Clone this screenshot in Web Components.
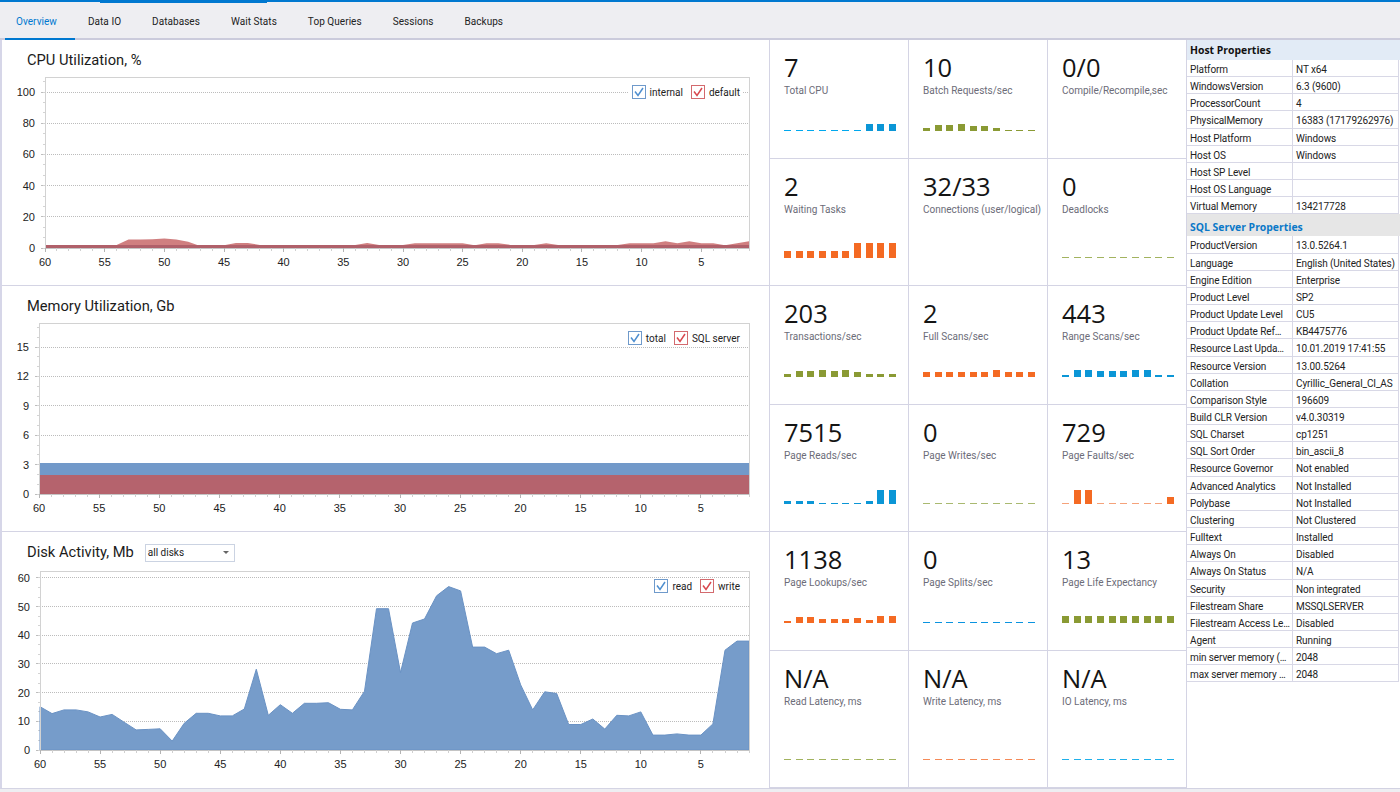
<!DOCTYPE html>
<html>
<head>
<meta charset="utf-8">
<title>Overview</title>
<style>
  html, body { margin: 0; background: #eeeef2; }
</style>
</head>
<body>
<dash-app>
  <tab-bar slot="tabs" tabs="Overview,Data IO,Databases,Wait Stats,Top Queries,Sessions,Backups"></tab-bar>

  <chart-panel slot="charts" heading="CPU Utilization, %" style="height:245px">
    <area-chart dataset="cpu"></area-chart>
  </chart-panel>
  <chart-panel slot="charts" heading="Memory Utilization, Gb" style="height:245px">
    <area-chart dataset="memory"></area-chart>
  </chart-panel>
  <chart-panel slot="charts" heading="Disk Activity, Mb" head="39" style="height:256px">
    <combo-box slot="tools" value="all disks"></combo-box>
    <area-chart dataset="disk"></area-chart>
  </chart-panel>

  <metric-tile slot="tiles" value="7" label="Total CPU" color="#0b96d6" dash="#00a8ee" bars="1,1,1,1,1,1,1,7,7,7"></metric-tile>
  <metric-tile slot="tiles" value="10" label="Batch Requests/sec" color="#8a9a34" dash="#8a9a34" bars="3,6,6,7,5,5,3,1,1,1"></metric-tile>
  <metric-tile slot="tiles" value="0/0" label="Compile/Recompile,sec"></metric-tile>
  <metric-tile slot="tiles" value="2" label="Waiting Tasks" color="#f46a23" bars="7,7,7,7,7,7,15,15,15,15"></metric-tile>
  <metric-tile slot="tiles" value="32/33" label="Connections (user/logical)"></metric-tile>
  <metric-tile slot="tiles" value="0" label="Deadlocks" color="#8a9a34" dash="#a2b35f" bars="1,1,1,1,1,1,1,1,1,1"></metric-tile>
  <metric-tile slot="tiles" value="203" label="Transactions/sec" color="#8a9a34" bars="3,6,6,7,6,7,5,3,3,3"></metric-tile>
  <metric-tile slot="tiles" value="2" label="Full Scans/sec" color="#f46a23" bars="5,5,5,5,5,5,7,5,5,5"></metric-tile>
  <metric-tile slot="tiles" value="443" label="Range Scans/sec" color="#0b96d6" bars="2,7,7,6,6,6,7,7,2,2"></metric-tile>
  <metric-tile slot="tiles" value="7515" label="Page Reads/sec" color="#0b96d6" bars="3,3,3,1,1,1,1,3,14,14"></metric-tile>
  <metric-tile slot="tiles" value="0" label="Page Writes/sec" color="#8a9a34" dash="#a9b970" bars="1,1,1,1,1,1,1,1,1,1"></metric-tile>
  <metric-tile slot="tiles" value="729" label="Page Faults/sec" color="#f46a23" dash="#f5a27a" bars="1,14,14,1,1,1,1,1,1,7"></metric-tile>
  <metric-tile slot="tiles" value="1138" label="Page Lookups/sec" color="#f46a23" bars="2,6,6,4,4,4,5,3,7,7"></metric-tile>
  <metric-tile slot="tiles" value="0" label="Page Splits/sec" color="#0b96d6" dash="#0a94e0" bars="1,1,1,1,1,1,1,1,1,1"></metric-tile>
  <metric-tile slot="tiles" value="13" label="Page Life Expectancy" color="#8a9a34" bars="7,7,7,7,7,7,7,7,7,7"></metric-tile>
  <metric-tile slot="tiles" value="N/A" label="Read Latency, ms" color="#8a9a34" dash="#a2b35f" bars="1,1,1,1,1,1,1,1,1,1"></metric-tile>
  <metric-tile slot="tiles" value="N/A" label="Write Latency, ms" color="#f46a23" dash="#f58a58" bars="1,1,1,1,1,1,1,1,1,1"></metric-tile>
  <metric-tile slot="tiles" value="N/A" label="IO Latency, ms" color="#0b96d6" dash="#1fb0ea" bars="1,1,1,1,1,1,1,1,1,1"></metric-tile>

  <prop-table slot="props"></prop-table>
</dash-app>

<script>
// valores leidos del grafico, de 60 a 1
const CHART_DATA = {
  cpu: {
    left: 45, plot: 171, step: 20, stepPx: 31.2, max: 100, minor: 3,
    legend: [['internal', 'blue'], ['default', 'red']],
    series: [
      { fill: '#d07f80', values: [2,2,2,2,2,2,2,5.4,5.4,5.6,6,5.4,4,1.2,1.7,1.7,3.2,3.2,2,2,2,2,2,2,2,2,2,3.2,2,2,2,3,3,3,3,3,1.7,3,3,2,2,2,3,2,2,2,2,2,2,3,3,3,4.3,3,4.3,3,3,1.7,3,4.3] },
      { fill: '#b0606a', values: new Array(60).fill(1.9) }
    ]
  },
  memory: {
    left: 39, plot: 171, step: 3, stepPx: 29.4, max: 15, minor: 3,
    legend: [['total', 'blue'], ['SQL server', 'red']],
    series: [
      { fill: '#7299c9', values: new Array(60).fill(3.16) },
      { fill: '#b5636d', values: new Array(60).fill(1.94) }
    ]
  },
  disk: {
    left: 40, plot: 179, step: 10, stepPx: 28.67, max: 60, minor: 3,
    legend: [['read', 'blue'], ['write', 'red']],
    series: [
      { fill: '#769cca', stroke: '#6a92c4', values: [15.1,12.7,14,14,13.3,11.5,12.4,9.7,7,7.2,7.4,3.1,9.3,12.8,12.8,11.9,11.9,14.3,28.2,12.1,15.8,12.8,16.3,16.3,16.5,14.2,14,20.5,49.3,49.3,27,44.3,45.7,53.8,57,55.5,35.9,35.9,33.6,34.8,22.7,14,20.3,19.7,8.9,8.9,10.8,7.3,12.1,11.9,13.3,5.2,5.2,5.6,5.2,5.2,9.1,34.8,38,38] }
    ]
  }
};

const HOST_PROPS = [
  ['Platform', 'NT x64'], ['WindowsVersion', '6.3 (9600)'], ['ProcessorCount', '4'],
  ['PhysicalMemory', '16383 (17179262976)'], ['Host Platform', 'Windows'], ['Host OS', 'Windows'],
  ['Host SP Level', ''], ['Host OS Language', ''], ['Virtual Memory', '134217728']
];
const SQL_PROPS = [
  ['ProductVersion', '13.0.5264.1'], ['Language', 'English (United States)'], ['Engine Edition', 'Enterprise'],
  ['Product Level', 'SP2'], ['Product Update Level', 'CU5'], ['Product Update Ref…', 'KB4475776'],
  ['Resource Last Upda…', '10.01.2019 17:41:55'], ['Resource Version', '13.00.5264'], ['Collation', 'Cyrillic_General_CI_AS'],
  ['Comparison Style', '196609'], ['Build CLR Version', 'v4.0.30319'], ['SQL Charset', 'cp1251'],
  ['SQL Sort Order', 'bin_ascii_8'], ['Resource Governor', 'Not enabled'], ['Advanced Analytics', 'Not Installed'],
  ['Polybase', 'Not Installed'], ['Clustering', 'Not Clustered'], ['Fulltext', 'Installed'],
  ['Always On', 'Disabled'], ['Always On Status', 'N/A'], ['Security', 'Non integrated'],
  ['Filestream Share', 'MSSQLSERVER'], ['Filestream Access Le…', 'Disabled'], ['Agent', 'Running'],
  ['min server memory (…', '2048'], ['max server memory …', '2048']
];

const SMALL_FONT = 'Roboto, "Liberation Sans", sans-serif';
const AXIS_FONT = '"Liberation Sans", Arial, sans-serif';
const BIG_FONT = '"Open Sans", "Noto Sans", sans-serif';

class DashApp extends HTMLElement {
  constructor() {
    super();
    this.attachShadow({ mode: 'open' });
    this.shadowRoot.innerHTML = `
    <style>
      :host { display: flex; flex-direction: column; width: 1400px; height: 792px; overflow: hidden;
              background: #eeeef2; font: 10px ${SMALL_FONT}; color: #222; }
      .main { display: flex; height: 749px; background: #fff; border-left: 2px solid #d6d6e8; border-bottom: 1px solid #d2d2e2; box-sizing: border-box; }
      .charts { display: flex; flex-direction: column; width: 767px; flex: none; border-right: 1px solid #d4d4e4; }
      .tiles { display: grid; grid-template-columns: repeat(3, 139px); grid-template-rows: 119px 127px 119px 127px 119px 137px; flex: none; }
      .props { flex: 1; min-width: 0; }
    </style>
    <slot name="tabs"></slot>
    <div class="main">
      <div class="charts"><slot name="charts"></slot></div>
      <div class="tiles"><slot name="tiles"></slot></div>
      <div class="props"><slot name="props"></slot></div>
    </div>`;
  }
}

class TabBar extends HTMLElement {
  connectedCallback() {
    const tabs = this.getAttribute('tabs').split(',');
    this.attachShadow({ mode: 'open' });
    this.shadowRoot.innerHTML = `
    <style>
      :host { display: block; height: 40px; box-sizing: border-box; background: #eeeef2; border-top: 2px solid #0078d0; position: relative; }
      .strip { position: absolute; left: 100px; top: -2px; width: 167px; height: 3px; background: #0078d0; }
      .row { display: flex; height: 38px; box-sizing: border-box; padding-left: 5px; padding-top: 1px; border-bottom: 2px solid #cbcbdc; }
      .tab { padding: 0 18px 0 13px; height: 37px; box-sizing: border-box; line-height: 38px; white-space: nowrap; color: #222; letter-spacing: .05px; }
      .tab.on { color: #0078d0; border-bottom: 2px solid #0078d0; padding-left: 11px; }
    </style>
    <div class="strip"></div>
    <div class="row">${tabs.map((t, i) => `<div class="tab ${i ? '' : 'on'}">${t}</div>`).join('')}</div>`;
  }
}

class ChartPanel extends HTMLElement {
  connectedCallback() {
    const head = this.getAttribute('head');
    this.attachShadow({ mode: 'open' });
    this.shadowRoot.innerHTML = `
    <style>
      :host { display: flex; flex-direction: column; flex: none; background: #fff; border-bottom: 1px solid #d4d4e4; }
      :host(:last-child) { border-bottom: none; }
      .head { display: flex; align-items: center; gap: 11px; flex: none; height: ${head || 37}px; padding: ${head ? 0 : 2}px 0 0 25px; box-sizing: border-box; }
      h2 { margin: 0; font: 400 14.7px Roboto, "Open Sans", sans-serif; color: #1b1b1b; white-space: nowrap; }
    </style>
    <div class="head"><h2>${this.getAttribute('heading')}</h2><slot name="tools"></slot></div>
    <slot></slot>`;
  }
}

class ComboBox extends HTMLElement {
  connectedCallback() {
    this.attachShadow({ mode: 'open' });
    this.shadowRoot.innerHTML = `
    <style>
      :host { display: flex; align-items: center; justify-content: space-between; width: 90px; height: 18px; margin-top: 2px; box-sizing: border-box;
              padding: 0 5px 0 2px; border: 1px solid #cbd3e2; background: #fff; color: #222; }
      i { width: 0; height: 0; border: 3px solid transparent; border-top: 3px solid #666; border-bottom: 0; }
    </style>
    <span>${this.getAttribute('value')}</span><i></i>`;
  }
}

class ChartLegend extends HTMLElement {
  set items(list) {
    const icon = c => {
      const edge = c === 'blue' ? '#6f9acb' : '#d36a6e';
      const tick = c === 'blue' ? '#4f8fd0' : '#d9484e';
      return `<svg width="14" height="14" viewBox="0 0 14 14"><rect x=".5" y=".5" width="13" height="13" fill="#fff" stroke="${edge}"/><path d="M3 6.5 6 10.5 11 3" fill="none" stroke="${tick}" stroke-width="1.5"/></svg>`;
    };
    this.shadowRoot.querySelector('.box').innerHTML =
      list.map(([t, c]) => `<span class="it">${icon(c)}<span>${t}</span></span>`).join('');
  }
  constructor() {
    super();
    this.attachShadow({ mode: 'open' });
    this.shadowRoot.innerHTML = `
    <style>
      :host { display: block; position: absolute; right: 26px; top: 7px; background: #fff; padding: 1px 3px; color: #222; }
      .box { display: flex; gap: 8px; }
      .it { display: flex; align-items: center; gap: 4px; white-space: nowrap; }
    </style>
    <div class="box"></div>`;
  }
}

class AreaChart extends HTMLElement {
  connectedCallback() {
    const d = CHART_DATA[this.getAttribute('dataset')];
    const right = 749 - 2, left = d.left - 2;      // el panel empieza en x=2
    const dx = (right - left) / 59;
    const zero = d.plot, unit = d.stepPx / d.step;
    let out = '';

    // rejilla horizontal y marcas del eje Y
    for (let v = 0; v <= d.max; v += d.step) {
      const y = zero - v * unit;
      if (v) out += `<line x1="${left}" x2="${right}" y1="${y}" y2="${y}" stroke="#bcbcbc" stroke-dasharray="1 1"/>`;
      out += `<line x1="${left - 4}" x2="${left}" y1="${y}" y2="${y}" stroke="#bdbdbd"/>`;
      out += `<text x="${left - 10}" y="${y + 4}" text-anchor="end">${v}</text>`;
    }
    for (let y = zero; y > 1; y -= d.stepPx / d.minor) {
      out += `<line x1="${left - 2}" x2="${left}" y1="${y}" y2="${y}" stroke="#d4d4d4"/>`;
    }

    // areas
    d.series.forEach(s => {
      const pts = s.values.map((v, i) => `${(left + i * dx).toFixed(1)},${(zero - v * unit).toFixed(1)}`);
      out += `<polygon points="${left},${zero} ${pts.join(' ')} ${right},${zero}" fill="${s.fill}" stroke="${s.stroke || 'none'}"/>`;
    });

    // marco
    out += `<path d="M${left} ${zero}V.5H${right}V${zero}" fill="none" stroke="#d2d2d2"/>`;
    out += `<line x1="${left}" x2="${right}" y1="${zero}" y2="${zero}" stroke="#c4c4c4"/>`;

    // eje X
    for (let n = 60; n >= 1; n--) {
      const x = +(left + (60 - n) * dx).toFixed(1);
      const major = n % 5 === 0;
      out += `<line x1="${x}" x2="${x}" y1="${zero}" y2="${zero + (major ? 4 : 3)}" stroke="${major ? '#b4b4b4' : '#d0d0d0'}"/>`;
      if (major) out += `<text x="${x}" y="${zero + 18}" text-anchor="middle">${n}</text>`;
    }

    this.attachShadow({ mode: 'open' });
    this.shadowRoot.innerHTML = `
    <style>
      :host { display: block; position: relative; flex: 1; min-height: 0; }
      svg { display: block; position: absolute; left: 0; top: 0; }
      text { font: 11px ${AXIS_FONT}; fill: #222; }
    </style>
    <svg width="767" height="${d.plot + 30}" shape-rendering="crispEdges">${out}</svg>
    <chart-legend></chart-legend>`;
    this.shadowRoot.querySelector('svg').querySelectorAll('polygon,text').forEach(n => n.setAttribute('shape-rendering', 'auto'));
    this.shadowRoot.querySelector('chart-legend').items = d.legend;
  }
}

class SparkBars extends HTMLElement {
  connectedCallback() {
    const bars = (this.getAttribute('bars') || '').split(',').filter(Boolean).map(Number);
    const color = this.getAttribute('color');
    const dash = this.getAttribute('dash') || color;
    this.attachShadow({ mode: 'open' });
    this.shadowRoot.innerHTML = `
    <style>
      :host { display: flex; align-items: flex-end; justify-content: space-between; width: 112px; height: 15px; }
      i { display: block; width: 7px; }
    </style>
    ${bars.map(h => `<i style="height:${h}px;background:${h > 1 ? color : dash}"></i>`).join('')}`;
  }
}

class MetricTile extends HTMLElement {
  connectedCallback() {
    const color = this.getAttribute('color') || '';
    const dash = this.getAttribute('dash') || '';
    const bars = this.getAttribute('bars') || '';
    this.attachShadow({ mode: 'open' });
    this.shadowRoot.innerHTML = `
    <style>
      :host { display: flex; flex-direction: column; box-sizing: border-box; padding: 8px 4px 27px 14px; background: #fff;
              border-right: 1px solid #d4d4e4; border-bottom: 1px solid #d4d4e4; overflow: hidden; }
      .val { font: 400 25.5px/38px ${BIG_FONT}; color: #141414; white-space: nowrap; }
      .lab { line-height: 14px; margin-top: -2px; color: #6c6c78; white-space: nowrap; }
      spark-bars { margin-top: auto; }
    </style>
    <div class="val">${this.getAttribute('value')}</div>
    <div class="lab">${this.getAttribute('label')}</div>
    <spark-bars color="${color}" dash="${dash}" bars="${bars}"></spark-bars>`;
  }
}

class PropTable extends HTMLElement {
  connectedCallback() {
    const rows = list => list.map(([k, v]) => `<div class="k">${k}</div><div class="v">${v}</div>`).join('');
    this.attachShadow({ mode: 'open' });
    this.shadowRoot.innerHTML = `
    <style>
      :host { display: block; background: #fff; color: #222; }
      .sec { height: 20px; padding-left: 3px; font: bold 10.4px/21px "Open Sans", sans-serif; background: #e2ebf6; color: #111; }
      .sec.sql { height: 22px; line-height: 26px; background: #e6e6e6; color: #0a78c8; }
      .grid { display: grid; grid-template-columns: 106px 106px; grid-auto-rows: 17.17px; }
      .k, .v { box-sizing: border-box; padding-left: 3px; line-height: 20px; white-space: nowrap; overflow: hidden; letter-spacing: -.1px;
               border-bottom: 1px solid #d8d8e6; border-right: 1px solid #d8d8e6; }
    </style>
    <div class="sec">Host Properties</div>
    <div class="grid">${rows(HOST_PROPS)}</div>
    <div class="sec sql">SQL Server Properties</div>
    <div class="grid">${rows(SQL_PROPS)}</div>`;
  }
}

customElements.define('chart-legend', ChartLegend);
customElements.define('spark-bars', SparkBars);
customElements.define('tab-bar', TabBar);
customElements.define('combo-box', ComboBox);
customElements.define('area-chart', AreaChart);
customElements.define('chart-panel', ChartPanel);
customElements.define('metric-tile', MetricTile);
customElements.define('prop-table', PropTable);
customElements.define('dash-app', DashApp);
</script>
</body>
</html>
